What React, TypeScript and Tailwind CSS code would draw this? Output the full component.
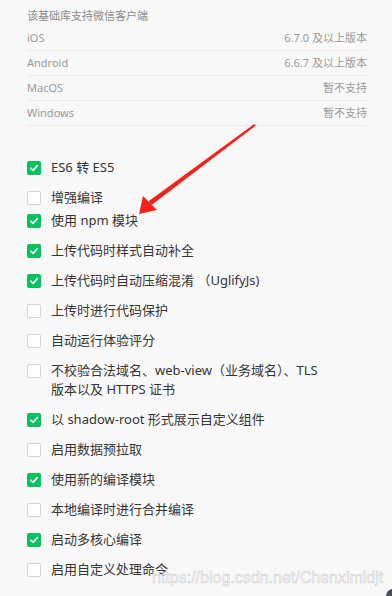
import React from 'react';

const clients = [
  { name: 'iOS', value: '6.7.0 及以上版本' },
  { name: 'Android', value: '6.6.7 及以上版本' },
  { name: 'MacOS', value: '暂不支持' },
  { name: 'Windows', value: '暂不支持' },
];

const options = [
  { label: '使用 npm 模块', checked: true },
  { label: '上传代码时样式自动补全', checked: true },
  { label: '上传代码时自动压缩混淆 （UglifyJs)', checked: true },
  { label: '上传时进行代码保护', checked: false },
  { label: '自动运行体验评分', checked: false },
  { label: '不校验合法域名、web-view（业务域名）、TLS\n版本以及 HTTPS 证书', checked: false },
  { label: '以 shadow-root 形式展示自定义组件', checked: true },
  { label: '启用数据预拉取', checked: false },
  { label: '使用新的编译模块', checked: true },
  { label: '本地编译时进行合并编译', checked: false },
  { label: '启动多核心编译', checked: true },
  { label: '启用自定义处理命令', checked: false },
];

const Check = ({ checked }: { checked: boolean }) =>
  checked ? (
    <span className="w-[14px] h-[14px] shrink-0 rounded-[2px] bg-[#07c160] flex items-center justify-center mt-[3px]">
      <svg width="10" height="10" viewBox="0 0 10 10" fill="none">
        <path d="M1.8 5.2 L4.1 7.4 L8.3 2.6" stroke="white" strokeWidth="1.6" strokeLinecap="round" strokeLinejoin="round" />
      </svg>
    </span>
  ) : (
    <span className="w-[14px] h-[14px] shrink-0 rounded-[2px] bg-white border border-[#d4d4d4] mt-[3px]" />
  );

const Option = ({ label, checked, className = '' }: { label: string; checked: boolean; className?: string }) => (
  <div className={`flex items-start gap-[10px] ${className}`}>
    <Check checked={checked} />
    <span className="text-[13px] leading-[19px] text-[#353535] w-[310px] whitespace-pre-line">{label}</span>
  </div>
);

export default function App() {
  return (
    <div
      className="relative w-[392px] h-[596px] overflow-hidden bg-[#f8f8f8]"
      style={{ fontFamily: '"Noto Sans", "Noto Sans CJK SC", sans-serif' }}
    >
      {/* client support table */}
      <div className="pl-[27px] pr-[25px] pt-[6px]">
        <div className="h-[20px] leading-[20px] text-[11px] text-[#8c8c8c]">该基础库支持微信客户端</div>
        {clients.map((c) => (
          <div
            key={c.name}
            className="h-[25px] flex items-center justify-between border-b border-[#ebebeb] text-[11px] text-[#9a9a9a]"
          >
            <span>{c.name}</span>
            <span>{c.value}</span>
          </div>
        ))}
      </div>

      {/* compile options */}
      <div className="pl-[27px] pt-[32px] flex flex-col">
        <Option label="ES6 转 ES5" checked className="h-[30px]" />
        <Option label="增强编译" checked={false} className="h-[23px]" />
        {options.map((o) => (
          <Option key={o.label} label={o.label} checked={o.checked} className="min-h-[30px] pb-[11px]" />
        ))}
      </div>

      {/* red arrow */}
      <svg className="absolute left-0 top-0 pointer-events-none" width="392" height="596">
        <polygon points="255.6,125.8 254.2,124.1 148.6,201.2 151.6,205" fill="#f5221b" />
        <polygon points="139,214 143,196 157,210" fill="#f5221b" />
      </svg>

      {/* watermark */}
      <div
        className="absolute left-[152px] top-[570px] text-[16px] leading-[16px] text-white/70"
        style={{ fontFamily: '"Liberation Sans", Arial, sans-serif', WebkitTextStroke: '0.5px rgba(160,160,160,0.6)' }}
      >
        https://blog.csdn.net/Chenximldjt
      </div>
      <div className="absolute left-[386px] top-[589px] w-[14px] h-[14px] rounded-full bg-[#4a4f55]" />
    </div>
  );
}
